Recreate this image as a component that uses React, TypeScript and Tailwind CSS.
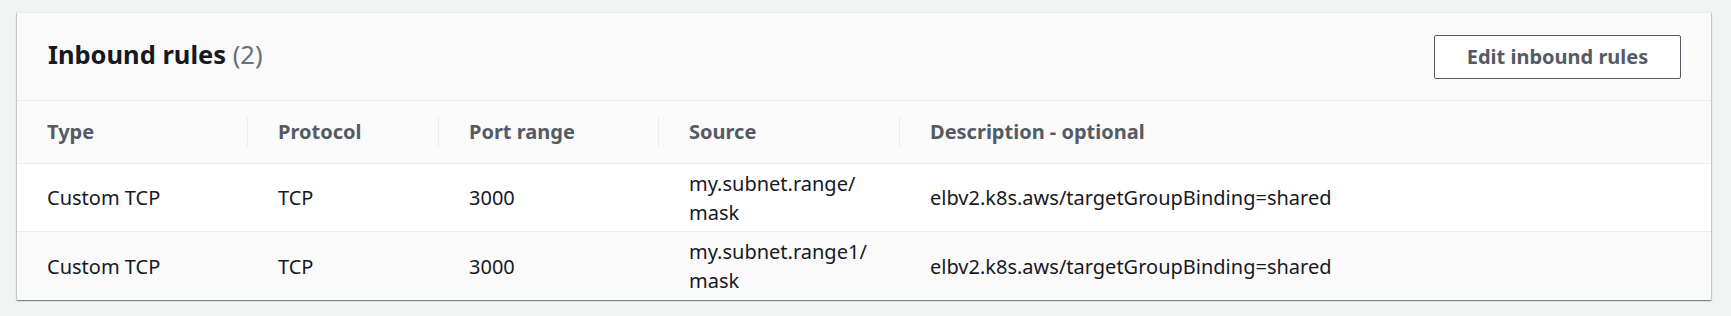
import React from "react";

const rules = [
  { type: "Custom TCP", protocol: "TCP", port: "3000", source: ["my.subnet.range/", "mask"], description: "elbv2.k8s.aws/targetGroupBinding=shared" },
  { type: "Custom TCP", protocol: "TCP", port: "3000", source: ["my.subnet.range1/", "mask"], description: "elbv2.k8s.aws/targetGroupBinding=shared" },
];

const columns = ["Type", "Protocol", "Port range", "Source", "Description - optional"];

const grid = "grid grid-cols-[230px_191px_220px_241px_1fr]";

export default function App() {
  return (
    <div
      className="min-h-[316px] w-full bg-[#f2f3f3] pt-[12px] pl-[17px] pr-[20px]"
      style={{ fontFamily: '"Noto Sans", "Liberation Sans", Arial, sans-serif' }}
    >
      <div className="bg-white border-t border-[#eaeded] shadow-[0_1px_1px_0_rgba(0,28,36,0.3),1px_1px_1px_0_rgba(0,28,36,0.15),-1px_1px_1px_0_rgba(0,28,36,0.15)]">
        {/* header */}
        <div className="h-[88px] flex items-center justify-between pl-[31px] pr-[30px] bg-[#fafafa] border-b border-[#eaeded]">
          <h2 className="text-[25.5px] font-bold text-[#16191f] leading-none pb-[4px]">
            Inbound rules <span className="font-normal text-[#687078]">(2)</span>
          </h2>
          <button className="h-[44px] w-[247px] border border-[#545b64] rounded-[2px] bg-white text-[#545b64] text-[20px] font-bold leading-none">
            Edit inbound rules
          </button>
        </div>

        {/* table header */}
        <div className={`${grid} h-[63px] bg-[#fafafa] border-b border-[#eaeded]`}>
          {columns.map((c, i) => (
            <div key={c} className="flex items-center">
              <div
                className={`h-[30px] flex items-center text-[20px] font-bold text-[#545b64] ${
                  i === 0 ? "pl-[30px]" : "pl-[30px] border-l border-[#eaeded]"
                }`}
              >
                {c}
              </div>
            </div>
          ))}
        </div>

        {/* rows */}
        {rules.map((r, idx) => (
          <div
            key={idx}
            className={`${grid} h-[68px] text-[20px] text-[#16191f] leading-[29px] ${
              idx === 0 ? "bg-white border-b border-[#eaeded]" : "bg-[#fafafa]"
            }`}
          >
            <div className="flex items-center pl-[30px]">{r.type}</div>
            <div className="flex items-center pl-[31px]">{r.protocol}</div>
            <div className="flex items-center pl-[31px]">{r.port}</div>
            <div className="flex items-center pl-[31px]">
              <div>
                {r.source[0]}
                <br />
                {r.source[1]}
              </div>
            </div>
            <div className="flex items-center pl-[31px]">{r.description}</div>
          </div>
        ))}
      </div>
    </div>
  );
}
